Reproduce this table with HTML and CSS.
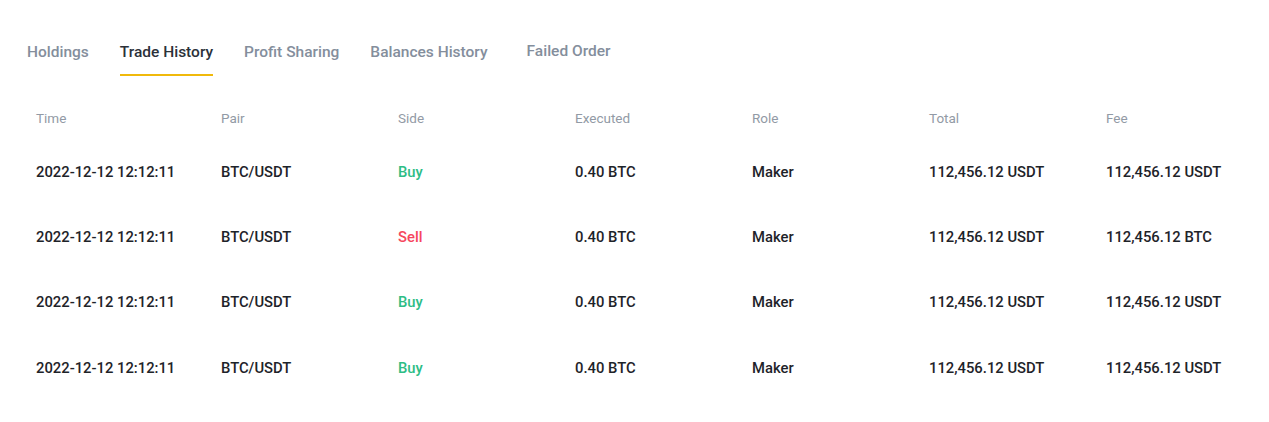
FILE: index.html
```html
<!DOCTYPE html>
<html>
<head>
<meta charset="utf-8">
<link rel="stylesheet" href="styles.css">
</head>
<body>
<div class="page">
  <nav class="tabs">
    <span class="tab">Holdings</span>
    <span class="tab active">Trade History</span>
    <span class="tab">Profit Sharing</span>
    <span class="tab">Balances History</span>
    <span class="tab failed">Failed Order</span>
  </nav>
  <div class="table">
    <div class="row head">
      <span>Time</span><span>Pair</span><span>Side</span><span>Executed</span><span>Role</span><span>Total</span><span>Fee</span>
    </div>
    <div class="row">
      <span>2022-12-12 12:12:11</span><span>BTC/USDT</span><span class="buy">Buy</span><span>0.40 BTC</span><span>Maker</span><span>112,456.12 USDT</span><span>112,456.12 USDT</span>
    </div>
    <div class="row">
      <span>2022-12-12 12:12:11</span><span>BTC/USDT</span><span class="sell">Sell</span><span>0.40 BTC</span><span>Maker</span><span>112,456.12 USDT</span><span>112,456.12 BTC</span>
    </div>
    <div class="row">
      <span>2022-12-12 12:12:11</span><span>BTC/USDT</span><span class="buy">Buy</span><span>0.40 BTC</span><span>Maker</span><span>112,456.12 USDT</span><span>112,456.12 USDT</span>
    </div>
    <div class="row">
      <span>2022-12-12 12:12:11</span><span>BTC/USDT</span><span class="buy">Buy</span><span>0.40 BTC</span><span>Maker</span><span>112,456.12 USDT</span><span>112,456.12 USDT</span>
    </div>
  </div>
</div>
</body>
</html>
```
FILE: styles.css
```css
html, body {
  margin: 0;
  padding: 0;
  background: #ffffff;
}
body {
  font-family: Roboto, "Liberation Sans", sans-serif;
  color: #1e2329;
}
.page {
  padding: 41px 0 0 27px;
}
.tabs {
  display: flex;
  align-items: flex-start;
  gap: 31px;
  height: 36px;
}
.tab {
  font-size: 15.5px;
  line-height: 22px;
  font-weight: 500;
  color: #848e9c;
  padding-bottom: 11px;
  border-bottom: 2px solid transparent;
}
.tab.active {
  color: #2b3139;
  border-bottom-color: #f0b90b;
}
.tab.failed {
  margin-left: 8px;
  margin-top: -1px;
}
.table {
  margin-top: 41px;
  padding-left: 9px;
}
.row {
  display: grid;
  grid-template-columns: 185px 177px 177px 177px 177px 177px 1fr;
  align-items: center;
  height: 65.4px;
  font-size: 14.8px;
  font-weight: 500;
  color: #1e2329;
}
.row span {
  white-space: nowrap;
}
.row.head {
  height: 20px;
  margin-top: -10px;
  margin-bottom: 11px;
  font-size: 13.5px;
  font-weight: 400;
  color: #929aa5;
}
.buy {
  color: #2ebd85;
}
.sell {
  color: #f6465d;
}
```
